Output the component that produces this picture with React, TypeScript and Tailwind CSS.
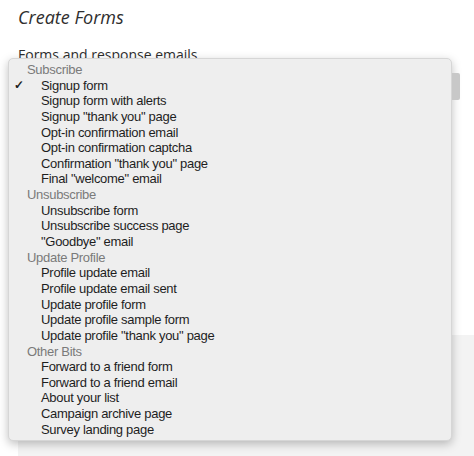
import React from "react";

const groups: { title: string; items: string[] }[] = [
  {
    title: "Subscribe",
    items: [
      "Signup form",
      "Signup form with alerts",
      'Signup "thank you" page',
      "Opt-in confirmation email",
      "Opt-in confirmation captcha",
      'Confirmation "thank you" page',
      'Final "welcome" email',
    ],
  },
  {
    title: "Unsubscribe",
    items: ["Unsubscribe form", "Unsubscribe success page", '"Goodbye" email'],
  },
  {
    title: "Update Profile",
    items: [
      "Profile update email",
      "Profile update email sent",
      "Update profile form",
      "Update profile sample form",
      'Update profile "thank you" page',
    ],
  },
  {
    title: "Other Bits",
    items: [
      "Forward to a friend form",
      "Forward to a friend email",
      "About your list",
      "Campaign archive page",
      "Survey landing page",
    ],
  },
];

export default function App() {
  return (
    <div className="relative w-[474px] h-[456px] overflow-hidden bg-white flex flex-col">
      <div
        className="flex flex-col px-[18px] pt-[5px] text-[#2e2e2e]"
        style={{ fontFamily: '"Open Sans", sans-serif' }}
      >
        <h1 className="text-[18px] leading-[24px] italic font-medium">Create Forms</h1>
        <div className="mt-[16px] text-[14px] leading-[20px] font-medium">Forms and response emails</div>
      </div>
      <div className="mt-[270px] ml-[18px] flex-1 bg-[#f3f3f3]" />

      {/* dropdown menu overlay */}
      <div className="absolute left-[8px] top-[58px] flex items-start">
        <div
          className="w-[444px] h-[383px] bg-[#eeeeee] rounded-[5px] border border-[#d6d6d6] shadow-[0_3px_10px_rgba(0,0,0,0.25)] pt-[3px] flex flex-col text-[13px] tracking-[-0.3px]"
          style={{ fontFamily: '"Liberation Sans", Helvetica, Arial, sans-serif' }}
        >
          {groups.map((g) => (
            <div key={g.title} className="flex flex-col">
              <div className="pl-[18px] h-[15.65px] leading-[15.65px] text-[#7a7a7a]">{g.title}</div>
              {g.items.map((it, i) => (
                <div key={it} className="flex h-[15.65px] leading-[15.65px] text-[#1e1e1e]">
                  <span className="w-[32px] pl-[5px] text-[12px] font-bold">
                    {g.title === "Subscribe" && i === 0 ? "✓" : ""}
                  </span>
                  <span>{it}</span>
                </div>
              ))}
            </div>
          ))}
        </div>
        <div className="mt-[15px] w-[8px] h-[27px] bg-[#c8c8c8] rounded-r-[2px]" />
      </div>
    </div>
  );
}
